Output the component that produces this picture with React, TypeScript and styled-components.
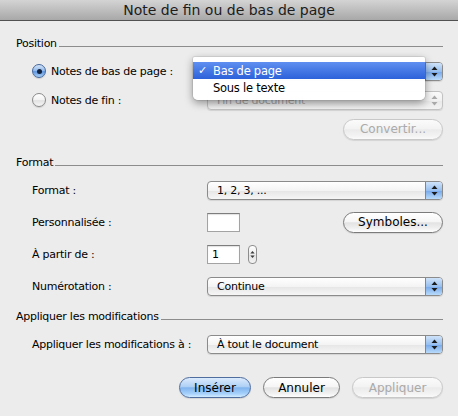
import React from "react";
import styled, { createGlobalStyle, css } from "styled-components";

const GlobalStyle = createGlobalStyle`
  html, body {
    margin: 0;
    padding: 0;
    background: #ececec;
  }
  body {
    font-family: "Lucida Grande", "DejaVu Sans", sans-serif;
  }
`;

type Tone = "normal" | "default" | "disabled";

const Arrows = ({ color }: { color: string }) => (
  <svg width="7" height="11" viewBox="0 0 7 11">
    <path d="M3.5 0.5 L6.5 4 L0.5 4 Z" fill={color} />
    <path d="M3.5 10.5 L6.5 7 L0.5 7 Z" fill={color} />
  </svg>
);

const App = () => {
  return (
    <>
      <GlobalStyle />
      <Window>
        <TitleBar>Note de fin ou de bas de page</TitleBar>
        <Body>
          <Section $top={0}>
            <SectionHeader>
              <span>Position</span>
              <HeaderRule />
            </SectionHeader>
            <Rows $gap={7}>
              <Row>
                <Label>
                  <Radio $checked />
                  Notes de bas de page :
                </Label>
                <Control>
                  {/* popup is open: its menu lists the choices over the button */}
                  <Popup>
                    <PopupText />
                    <PopupArrows>
                      <Arrows color="#1b1b1b" />
                    </PopupArrows>
                  </Popup>
                  <Menu>
                    <MenuItem $selected>
                      <Check>✓</Check>
                      Bas de page
                    </MenuItem>
                    <MenuItem>Sous le texte</MenuItem>
                  </Menu>
                </Control>
              </Row>
              <Row>
                <Label>
                  <Radio />
                  Notes de fin :
                </Label>
                <Control>
                  <Popup $disabled>
                    <PopupText>Fin de document</PopupText>
                    <PopupArrows $disabled>
                      <Arrows color="#a9a9a9" />
                    </PopupArrows>
                  </Popup>
                </Control>
              </Row>
              <Row>
                <Label />
                <Control $justify="flex-end">
                  <PushButton $tone="disabled" $width={100}>
                    Convertir...
                  </PushButton>
                </Control>
              </Row>
            </Rows>
          </Section>

          <Section $top={15}>
            <SectionHeader>
              <span>Format</span>
              <HeaderRule />
            </SectionHeader>
            <Rows $gap={10}>
              <Row>
                <Label>Format :</Label>
                <Control>
                  <Popup>
                    <PopupText>1, 2, 3, ...</PopupText>
                    <PopupArrows>
                      <Arrows color="#1b1b1b" />
                    </PopupArrows>
                  </Popup>
                </Control>
              </Row>
              <Row>
                <Label>Personnalisée :</Label>
                <Control>
                  <TextField />
                  <PushButton $tone="normal" $width={100}>
                    Symboles...
                  </PushButton>
                </Control>
              </Row>
              <Row>
                <Label>À partir de :</Label>
                <Control $justify="flex-start">
                  <TextField>1</TextField>
                  <Stepper>
                    <Arrows color="#3a3a3a" />
                  </Stepper>
                </Control>
              </Row>
              <Row>
                <Label>Numérotation :</Label>
                <Control>
                  <Popup>
                    <PopupText>Continue</PopupText>
                    <PopupArrows>
                      <Arrows color="#1b1b1b" />
                    </PopupArrows>
                  </Popup>
                </Control>
              </Row>
            </Rows>
          </Section>

          <Section $top={12}>
            <SectionHeader>
              <span>Appliquer les modifications</span>
              <HeaderRule />
            </SectionHeader>
            <Rows $gap={0}>
              <Row>
                <Label>Appliquer les modifications à :</Label>
                <Control>
                  <Popup>
                    <PopupText>À tout le document</PopupText>
                    <PopupArrows>
                      <Arrows color="#1b1b1b" />
                    </PopupArrows>
                  </Popup>
                </Control>
              </Row>
            </Rows>
          </Section>

          <ButtonBar>
            <PushButton $tone="default" $width={72}>
              Insérer
            </PushButton>
            <PushButton $tone="normal" $width={77}>
              Annuler
            </PushButton>
            <PushButton $tone="disabled" $width={91}>
              Appliquer
            </PushButton>
          </ButtonBar>
        </Body>
      </Window>
    </>
  );
};

const Window = styled.div`
  width: 458px;
  height: 416px;
  display: flex;
  flex-direction: column;
  background: #ececec;
  color: #000;
  font-size: 11px;
  letter-spacing: -0.25px;
  overflow: hidden;
`;

const TitleBar = styled.div`
  height: 20px;
  flex-shrink: 0;
  display: flex;
  align-items: center;
  justify-content: center;
  border-bottom: 1px solid #515151;
  background: linear-gradient(#d4d4d4, #a8a8a8);
  color: #1c1c1c;
  font-size: 14px;
  letter-spacing: 0;
`;

const Body = styled.div`
  display: flex;
  flex-direction: column;
  padding: 15px 15px 0 16px;
`;

const Section = styled.section<{ $top: number }>`
  display: flex;
  flex-direction: column;
  gap: 8px;
  margin-top: ${(p) => p.$top}px;
`;

const SectionHeader = styled.div`
  display: flex;
  align-items: flex-end;
  gap: 2px;
  height: 16px;
  line-height: 16px;
`;

const HeaderRule = styled.div`
  flex: 1;
  height: 1px;
  margin-bottom: 5px;
  background: #8c8c8c;
`;

const Rows = styled.div<{ $gap: number }>`
  display: flex;
  flex-direction: column;
  gap: ${(p) => p.$gap}px;
  padding-left: 16px;
`;

const Row = styled.div`
  display: grid;
  grid-template-columns: 175px 1fr;
  height: 22px;
`;

const Label = styled.div`
  display: flex;
  align-items: center;
  gap: 5px;
  white-space: nowrap;
`;

const Control = styled.div<{ $justify?: string }>`
  position: relative;
  display: flex;
  align-items: center;
  justify-content: ${(p) => p.$justify ?? "space-between"};
  gap: 8px;
`;

const Radio = styled.span<{ $checked?: boolean }>`
  position: relative;
  width: 14px;
  height: 14px;
  box-sizing: border-box;
  border-radius: 50%;
  flex-shrink: 0;
  border: 1px solid #8a8a8a;
  background: linear-gradient(#ffffff, #f2f2f2 50%, #e2e2e2 55%, #f6f6f6);
  box-shadow: 0 1px 1px rgba(0, 0, 0, 0.12);
  ${(p) =>
    p.$checked &&
    css`
      border-color: #45679c;
      background: linear-gradient(#d3e4f8, #8fb7ea 50%, #5f95de 55%, #a9d0f6);
      &::after {
        content: "";
        position: absolute;
        left: 3.5px;
        top: 3.5px;
        width: 5px;
        height: 5px;
        border-radius: 50%;
        background: #13223c;
      }
    `}
`;

const Popup = styled.div<{ $disabled?: boolean }>`
  flex: 1;
  height: 19px;
  box-sizing: border-box;
  display: flex;
  align-items: stretch;
  overflow: hidden;
  border: 1px solid #8b8b8b;
  border-radius: 4px;
  background: linear-gradient(#ffffff, #f4f4f4 50%, #e6e6e6 52%, #f6f6f6);
  box-shadow: 0 1px 1px rgba(0, 0, 0, 0.1);
  ${(p) =>
    p.$disabled &&
    css`
      border-color: #c2c2c2;
      color: #a6a6a6;
      background: linear-gradient(#fafafa, #f1f1f1 50%, #e9e9e9 52%, #f3f3f3);
    `}
`;

const PopupText = styled.span`
  flex: 1;
  display: flex;
  align-items: center;
  padding-left: 9px;
  white-space: nowrap;
`;

const PopupArrows = styled.span<{ $disabled?: boolean }>`
  width: 16px;
  display: flex;
  align-items: center;
  justify-content: center;
  border-left: 1px solid #6c88b8;
  background: linear-gradient(#cfe3f9, #97bff0 50%, #76a8ea 52%, #b9dbfb);
  ${(p) =>
    p.$disabled &&
    css`
      border-left-color: transparent;
      background: transparent;
    `}
`;

const Menu = styled.div`
  position: absolute;
  left: -14px;
  top: -3px;
  z-index: 2;
  width: 232px;
  box-sizing: border-box;
  padding: 5px 0 4px;
  background: rgba(255, 255, 255, 0.98);
  border-radius: 2px 2px 5px 5px;
  box-shadow: 0 3px 9px rgba(0, 0, 0, 0.4), 0 0 0 1px rgba(0, 0, 0, 0.07);
`;

const MenuItem = styled.div<{ $selected?: boolean }>`
  position: relative;
  height: 17px;
  display: flex;
  align-items: center;
  padding-left: 20px;
  font-size: 11.5px;
  ${(p) =>
    p.$selected &&
    css`
      color: #fff;
      background: linear-gradient(#5f8ff0, #2c62da);
    `}
`;

const Check = styled.span`
  position: absolute;
  left: 5px;
  font-size: 11px;
`;

const TextField = styled.div`
  width: 33px;
  height: 19px;
  box-sizing: border-box;
  display: flex;
  align-items: center;
  padding-left: 4px;
  background: #fff;
  border: 1px solid #a3a3a3;
  border-top-color: #7d7d7d;
  box-shadow: inset 0 1px 1px rgba(0, 0, 0, 0.12);
`;

const Stepper = styled.span`
  width: 9px;
  height: 19px;
  box-sizing: border-box;
  display: flex;
  align-items: center;
  justify-content: center;
  border: 1px solid #8e8e8e;
  border-radius: 4px;
  background: linear-gradient(#ffffff, #ececec 50%, #e1e1e1 52%, #f4f4f4);

  svg {
    width: 5px;
    height: 11px;
  }
`;

const toneStyles = {
  normal: css`
    color: #000;
    border-color: #7b7b7b;
    background: linear-gradient(#ffffff, #f6f6f6 45%, #e3e3e3 52%, #f0f0f0 80%, #ffffff);
  `,
  default: css`
    color: #000;
    border-color: #4f6d9e;
    background: linear-gradient(#dcebfd, #afd0f5 45%, #80b4ef 52%, #a5d0fb 82%, #d2ebff);
  `,
  disabled: css`
    color: #aaaaaa;
    border-color: #c8c8c8;
    background: linear-gradient(#fbfbfb, #f3f3f3 45%, #ebebeb 52%, #f2f2f2 80%, #fafafa);
  `,
};

const PushButton = styled.button<{ $tone: Tone; $width: number }>`
  width: ${(p) => p.$width}px;
  height: 21px;
  box-sizing: border-box;
  padding: 0;
  border: 1px solid;
  border-radius: 11px;
  font-family: inherit;
  font-size: 12px;
  letter-spacing: 0;
  box-shadow: 0 1px 1px rgba(0, 0, 0, 0.1);
  ${(p) => toneStyles[p.$tone]}
`;

const ButtonBar = styled.div`
  display: flex;
  justify-content: flex-end;
  gap: 12px;
  margin-top: 22px;
`;

export default App;
